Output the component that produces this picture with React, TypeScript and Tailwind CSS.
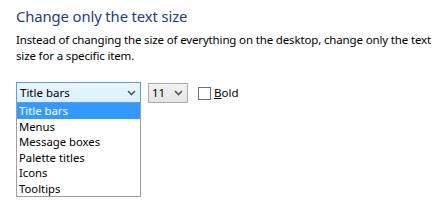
import React from 'react';

const items = ['Title bars', 'Menus', 'Message boxes', 'Palette titles', 'Icons', 'Tooltips'];

const Chevron: React.FC = () => (
    <svg width="9" height="6" viewBox="0 0 9 6" className="shrink-0">
        <path d="M1 1 L4.5 4.5 L8 1" fill="none" stroke="#555" strokeWidth="1.6" />
    </svg>
);

const App: React.FC = () => {
    return (
        <div className="w-[448px] h-[208px] bg-white text-black overflow-hidden pl-4 pt-[6px] font-['Noto_Sans',sans-serif]">
            <h1 className="text-[14.8px] leading-[20px] text-[#1e3c8c] tracking-[-0.1px]">Change only the text size</h1>
            <p className="mt-[6px] text-[11.5px] leading-[16px] w-[422px] tracking-[-0.15px]">
                Instead of changing the size of everything on the desktop, change only the text size for a specific item.
            </p>
            <div className="mt-[18px] flex items-start">
                <div className="w-[125px]">
                    <div className="h-[21px] border border-[#5a9fe0] bg-gradient-to-b from-[#eaf6fd] to-[#d9f0fc] flex items-center justify-between pl-[3px] pr-[4px] text-[11.5px]">
                        <span>Title bars</span>
                        <Chevron />
                    </div>
                    <ul className="border border-t-0 border-[#a0a0a0] text-[11.3px] leading-[15.5px]">
                        {items.map((item, i) => (
                            <li key={item} className={`pl-[2px] ${i === 0 ? 'bg-[#3399ff] text-white' : ''}`}>
                                {item}
                            </li>
                        ))}
                    </ul>
                </div>
                <div className="ml-[7px] mt-[1px] w-[40px] h-[20px] border border-[#acacac] bg-gradient-to-b from-[#f2f2f2] to-[#e5e5e5] flex items-center justify-between pl-[3px] pr-[4px] text-[11.5px]">
                    <span>11</span>
                    <Chevron />
                </div>
                <label className="ml-[10px] mt-[4px] flex items-center text-[11.5px] leading-[14px]">
                    <span className="w-[13px] h-[13px] border border-[#707070] bg-white" />
                    <span className="ml-[3px]"><span className="underline">B</span>old</span>
                </label>
            </div>
        </div>
    );
};

export default App;
